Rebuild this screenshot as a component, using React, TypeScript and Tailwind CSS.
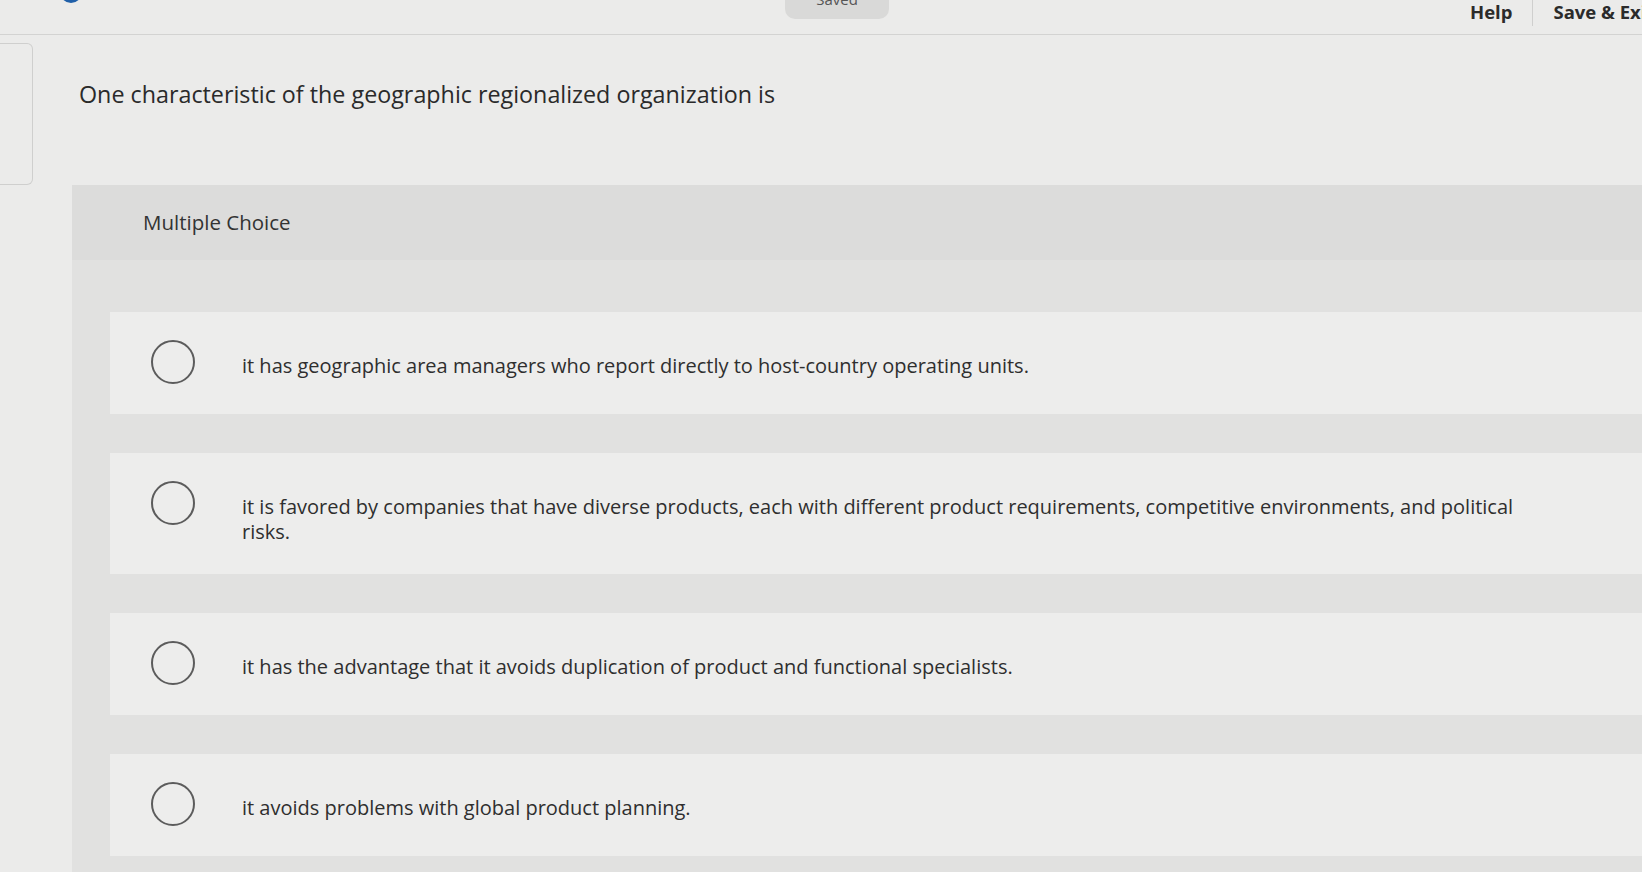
import { useState } from "react";

const choices = [
  "it has geographic area managers who report directly to host-country operating units.",
  "it is favored by companies that have diverse products, each with different product requirements, competitive environments, and political risks.",
  "it has the advantage that it avoids duplication of product and functional specialists.",
  "it avoids problems with global product planning.",
];

export default function App() {
  const [picked, setPicked] = useState<number | null>(null);

  return (
    <div className="h-[872px] w-[1642px] overflow-hidden bg-[#ebebea] font-['Open_Sans',sans-serif] text-[#2e2e2e]">
      {/* Top bar */}
      <header className="flex h-[35px] items-start border-b border-[#d3d3d2]">
        <div className="ml-[60px] -mt-[19px] h-[22px] w-[22px] rounded-full bg-[#1f5fa8]" />
        <div className="flex flex-1 justify-center pl-[122px]">
          <div className="-mt-[11px] flex h-[30px] w-[104px] items-start justify-center rounded-b-[10px] bg-[#d9d9d8] text-[15px] leading-[20px] text-[#555]">
            Saved
          </div>
        </div>
        <div className="flex w-[172px] items-start overflow-hidden whitespace-nowrap text-[18.5px] font-bold leading-[22px] text-[#2b2b2b]">
          <span className="pt-[1px]">Help</span>
          <span className="mx-[20px] h-[26px] w-px shrink-0 bg-[#cfcfce]" />
          <span className="pt-[1px]">Save &amp; Exit</span>
        </div>
      </header>

      {/* Question row */}
      <div className="flex h-[150px]">
        <div className="mt-[8px] h-[142px] w-[33px] rounded-r-[6px] border border-l-0 border-[#cfcfce]" />
        <p className="pl-[46px] pt-[44px] text-[23.3px] leading-[30px] text-[#2a2a2a]">
          One characteristic of the geographic regionalized organization is
        </p>
      </div>

      {/* Answer panel */}
      <section className="ml-[72px] bg-[#e1e1e0]">
        <div className="flex h-[75px] items-center bg-[#dcdcdb] pl-[71px] text-[20.5px] text-[#333]">
          Multiple Choice
        </div>
        <div className="flex flex-col gap-[39px] pt-[52px] pb-[20px]">
          {choices.map((c, i) => (
            <button
              key={i}
              onClick={() => setPicked(i)}
              className="ml-[38px] flex items-start bg-[#ededec] pb-[30px] pl-[41px] pt-[28px] text-left"
            >
              <span className="flex h-[44px] w-[44px] shrink-0 items-center justify-center rounded-full border-2 border-[#5c5c5c]">
                {picked === i && <span className="h-[22px] w-[22px] rounded-full bg-[#3a3a3a]" />}
              </span>
              <span className="ml-[47px] mt-[13px] max-w-[1285px] text-[20px] leading-[25px] text-[#2f2f2f]">
                {c}
              </span>
            </button>
          ))}
        </div>
      </section>
    </div>
  );
}
